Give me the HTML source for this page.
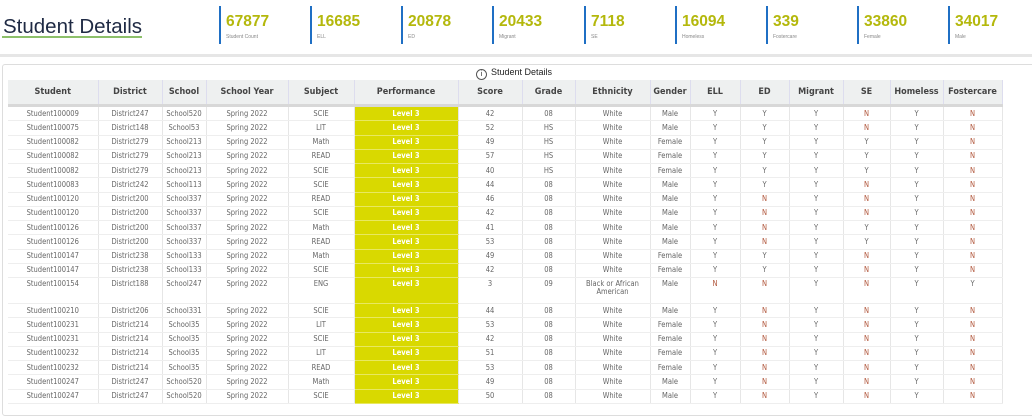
<!DOCTYPE html><html><head><style>
body{margin:0;width:1032px;height:405px;overflow:hidden;background:#fff;font-family:"Liberation Sans",sans-serif;position:relative}
.t{position:absolute;left:3px;top:15px;font-size:20.5px;color:#1f2a44}
.ul{position:absolute;left:2px;top:36px;width:140px;height:2px;background:#8dc06a}
.k{position:absolute;top:6px;height:38px;border-left:2px solid #1f6fc4;padding-left:5px}
.k b{display:block;font-size:15.5px;color:#b4b80c;margin-top:8px;line-height:16px}
.k i{display:block;font-style:normal;font-size:5px;color:#888;margin-top:4px}
.band{position:absolute;left:0;top:54px;width:1032px;height:3px;background:#e6e6e6}
.panel{position:absolute;left:2px;top:64px;width:1040px;height:350px;border:1px solid #ddd;border-radius:3px}
.cap{position:absolute;left:476px;top:67px;font-size:9px;color:#222}
.cap span{display:inline-block;width:9px;height:9px;border:1px solid #555;border-radius:50%;font-size:7px;text-align:center;line-height:9px;margin-right:4px;vertical-align:-1px}
table{position:absolute;left:8px;top:80px;border-collapse:collapse;font-family:"DejaVu Sans Condensed","Liberation Sans",sans-serif;table-layout:fixed}
th{background:#eef0f0;height:24px;font-size:9px;color:#444;font-weight:bold;border-right:1px solid #dde;border-bottom:3px solid #d8d8d8;padding:0}
td{height:13.25px;font-size:7.5px;color:#666;text-align:center;border-right:1px solid #e6e6e6;border-bottom:1px solid #eee;padding:0;line-height:8px}
td.p{background:#d9d900;color:#fff;font-weight:bold;border-bottom:1px solid #e8e860}
td.n{color:#b0553a}
tr.tall td{height:23px;vertical-align:top;padding-top:2px}
</style></head><body>
<div class="t">Student Details</div><div class="ul"></div>
<div class="k" style="left:219px"><b>67877</b><i>Student Count</i></div>
<div class="k" style="left:310px"><b>16685</b><i>ELL</i></div>
<div class="k" style="left:401px"><b>20878</b><i>ED</i></div>
<div class="k" style="left:492px"><b>20433</b><i>Migrant</i></div>
<div class="k" style="left:584px"><b>7118</b><i>SE</i></div>
<div class="k" style="left:675px"><b>16094</b><i>Homeless</i></div>
<div class="k" style="left:766px"><b>339</b><i>Fostercare</i></div>
<div class="k" style="left:857px"><b>33860</b><i>Female</i></div>
<div class="k" style="left:948px"><b>34017</b><i>Male</i></div>
<div class="band"></div>
<div class="panel"></div>
<div class="cap"><span>i</span>Student Details</div>
<table>
<colgroup><col style="width:90px"><col style="width:64px"><col style="width:44px"><col style="width:82px"><col style="width:66px"><col style="width:104px"><col style="width:64px"><col style="width:53px"><col style="width:75px"><col style="width:40px"><col style="width:50px"><col style="width:49px"><col style="width:54px"><col style="width:47px"><col style="width:53px"><col style="width:59px"></colgroup>
<tr><th>Student</th><th>District</th><th>School</th><th>School Year</th><th>Subject</th><th>Performance</th><th>Score</th><th>Grade</th><th>Ethnicity</th><th>Gender</th><th>ELL</th><th>ED</th><th>Migrant</th><th>SE</th><th>Homeless</th><th>Fostercare</th></tr>
<tbody id="b"></tbody>
</table>
<script>
var R=[["Student100009","District247","School520","SCIE","42","08","White","Male","YYYNYN"],
["Student100075","District148","School53","LIT","52","HS","White","Male","YYYNYN"],
["Student100082","District279","School213","Math","49","HS","White","Female","YYYYYN"],
["Student100082","District279","School213","READ","57","HS","White","Female","YYYYYN"],
["Student100082","District279","School213","SCIE","40","HS","White","Female","YYYYYN"],
["Student100083","District242","School113","SCIE","44","08","White","Male","YYYNYN"],
["Student100120","District200","School337","READ","46","08","White","Male","YNYNYN"],
["Student100120","District200","School337","SCIE","42","08","White","Male","YNYNYN"],
["Student100126","District200","School337","Math","41","08","White","Male","YNYYYN"],
["Student100126","District200","School337","READ","53","08","White","Male","YNYYYN"],
["Student100147","District238","School133","Math","49","08","White","Female","YYYNYN"],
["Student100147","District238","School133","SCIE","42","08","White","Female","YYYNYN"],
["Student100154","District188","School247","ENG","3","09","Black or African American","Male","NNYNYY"],
["Student100210","District206","School331","SCIE","44","08","White","Male","YNYNYN"],
["Student100231","District214","School35","LIT","53","08","White","Female","YNYNYN"],
["Student100231","District214","School35","SCIE","42","08","White","Female","YNYNYN"],
["Student100232","District214","School35","LIT","51","08","White","Female","YNYNYN"],
["Student100232","District214","School35","READ","53","08","White","Female","YNYNYN"],
["Student100247","District247","School520","Math","49","08","White","Male","YNYNYN"],
["Student100247","District247","School520","SCIE","50","08","White","Male","YNYNYN"]];
var h="";R.forEach(function(r){h+='<tr'+(r[6].length>5?' class="tall"':'')+'><td>'+r[0]+'</td><td>'+r[1]+'</td><td>'+r[2]+'</td><td>Spring 2022</td><td>'+r[3]+'</td><td class="p">Level 3</td><td>'+r[4]+'</td><td>'+r[5]+'</td><td>'+r[6]+'</td><td>'+r[7]+'</td>';
r[8].split("").forEach(function(c){h+='<td'+(c=="N"?' class="n"':'')+'>'+c+'</td>'});h+='</tr>'});
document.getElementById("b").innerHTML=h;
</script>
</body></html>
